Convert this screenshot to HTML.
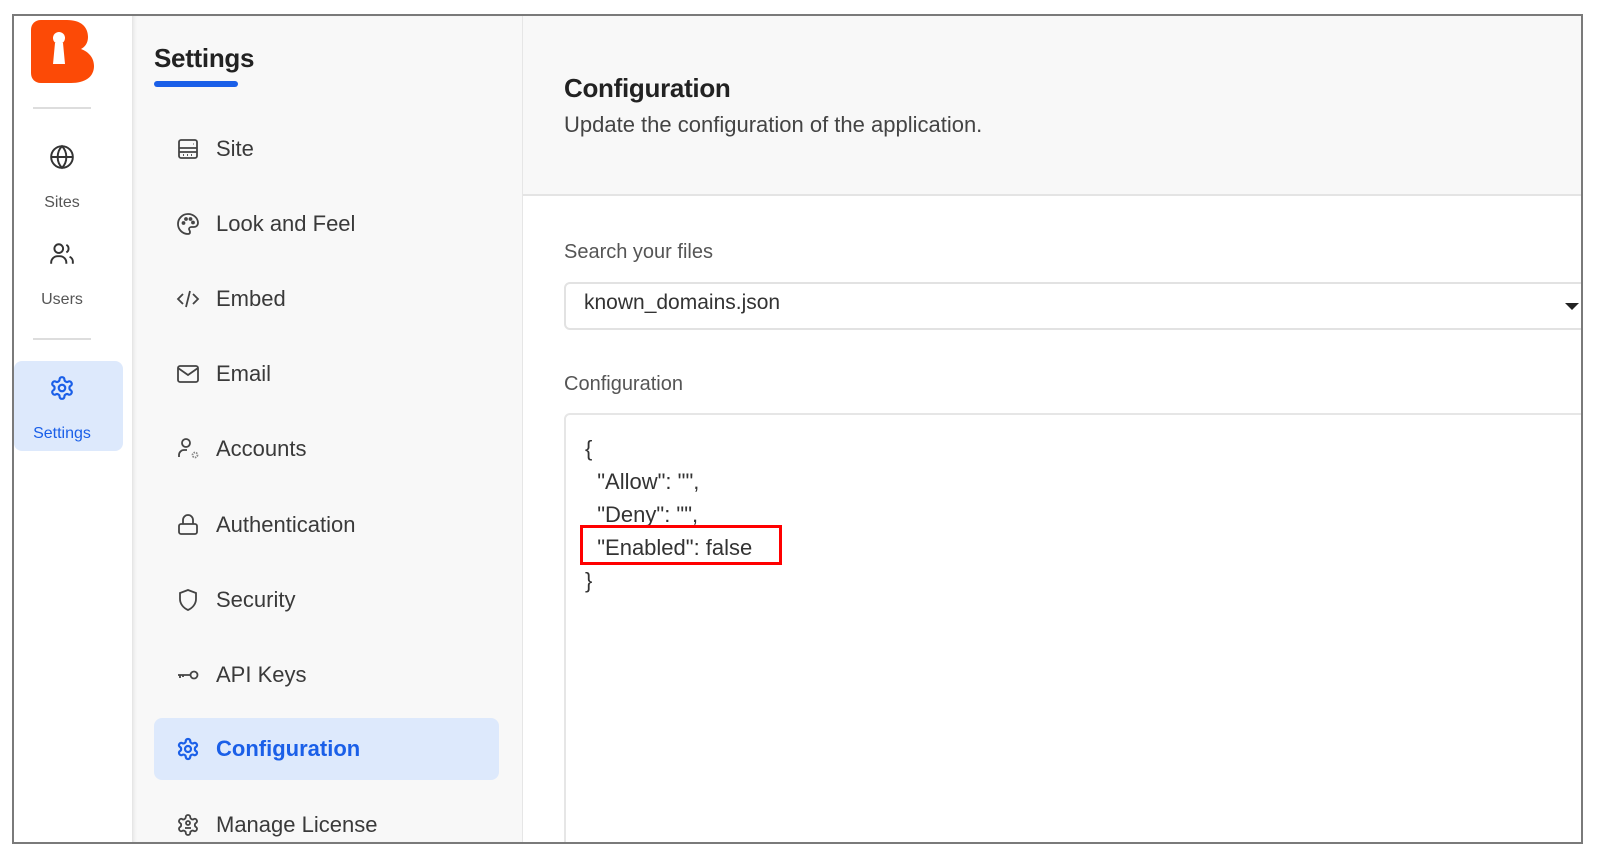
<!DOCTYPE html>
<html><head><meta charset="utf-8">
<style>
*{margin:0;padding:0;box-sizing:border-box}
html,body{width:1598px;height:851px;background:#fff;overflow:hidden;font-family:"Liberation Sans",Arial,sans-serif;color:#333}
.abs{position:absolute}
.frame{left:12px;top:14px;width:1571px;height:830px;border:2px solid #7a7a7a;overflow:hidden}
.rail{left:0;top:0;width:118px;height:100%;background:#fff}
.panel{left:118px;top:0;width:391px;height:100%;background:#f8f8f8;box-shadow:inset 4px 0 5px -3px rgba(0,0,0,.12);border-right:1px solid #e6e6e6}
.main{left:509px;top:0;right:0;height:100%;background:#fff}
.item{position:absolute;left:22px;font-size:22px;color:#3a3a3a;height:30px;line-height:30px}
.item svg{position:absolute;left:22px;top:3px}
.item span{position:absolute;left:62px;white-space:nowrap}
.rl{position:absolute;left:0;width:96px;text-align:center;font-size:16px;color:#555}
</style></head><body>
<div class="abs frame">
 <div class="abs rail">
  <svg class="abs" style="left:17px;top:4px" width="64" height="64" viewBox="0 0 64 64">
   <path d="M10 0H36C50 0 57 7 57 17C57 23 54 27 50 29C58 32 63 38 63 46C63 57 54 63 40 63H10C4 63 0 59 0 53V10C0 4 4 0 10 0Z" fill="#fc4a06"/>
   <circle cx="28" cy="18" r="6" fill="#fff"/>
   <path d="M24 23H32L34 44H22Z" fill="#fff"/>
  </svg>
  <div class="abs" style="left:19px;top:91px;width:58px;height:2px;background:#ddd"></div>
  <svg class="abs" style="left:35px;top:128px" width="26" height="26" viewBox="0 0 24 24" fill="none" stroke="#333" stroke-width="1.8"><circle cx="12" cy="12" r="10"/><path d="M2 12h20M12 2c3 3 4 6.5 4 10s-1 7-4 10c-3-3-4-6.5-4-10s1-7 4-10z"/></svg>
  <div class="rl" style="top:178px">Sites</div>
  <svg class="abs" style="left:35px;top:225px" width="26" height="26" viewBox="0 0 24 24" fill="none" stroke="#333" stroke-width="1.8"><circle cx="9" cy="7" r="4"/><path d="M2 21v-1a6 6 0 0 1 6-6h2a6 6 0 0 1 6 6v1M16 3.5a4 4 0 0 1 0 7M19 14.5a5 5 0 0 1 3 5V21"/></svg>
  <div class="rl" style="top:275px">Users</div>
  <div class="abs" style="left:19px;top:322px;width:58px;height:2px;background:#ddd"></div>
  <div class="abs" style="left:0px;top:345px;width:109px;height:90px;background:#dde9fc;border-radius:8px"></div>
  <svg class="abs" style="left:35px;top:359px" width="26" height="26" viewBox="0 0 24 24" fill="none" stroke="#1a5fe8" stroke-width="2"><path d="M12.22 2h-.44a2 2 0 0 0-2 2v.18a2 2 0 0 1-1 1.73l-.43.25a2 2 0 0 1-2 0l-.15-.08a2 2 0 0 0-2.73.73l-.22.38a2 2 0 0 0 .73 2.73l.15.1a2 2 0 0 1 1 1.72v.51a2 2 0 0 1-1 1.74l-.15.09a2 2 0 0 0-.73 2.73l.22.38a2 2 0 0 0 2.73.73l.15-.08a2 2 0 0 1 2 0l.43.25a2 2 0 0 1 1 1.73V20a2 2 0 0 0 2 2h.44a2 2 0 0 0 2-2v-.18a2 2 0 0 1 1-1.73l.43-.25a2 2 0 0 1 2 0l.15.08a2 2 0 0 0 2.73-.73l.22-.39a2 2 0 0 0-.73-2.73l-.15-.08a2 2 0 0 1-1-1.74v-.5a2 2 0 0 1 1-1.74l.15-.09a2 2 0 0 0 .73-2.73l-.22-.38a2 2 0 0 0-2.73-.73l-.15.08a2 2 0 0 1-2 0l-.43-.25a2 2 0 0 1-1-1.73V4a2 2 0 0 0-2-2z"/><circle cx="12" cy="12" r="3"/></svg>
  <div class="rl" style="top:409px;color:#1a5fe8">Settings</div>
 </div>
 <div class="abs panel">
  <div class="abs" style="left:22px;top:27px;font-size:26px;color:#222;font-weight:bold;letter-spacing:-0.3px">Settings</div>
  <div class="abs" style="left:22px;top:65px;width:84px;height:6px;border-radius:3px;background:#1a5fe8"></div>
  <div class="item" style="top:118px"><svg width="24" height="24" viewBox="0 0 24 24" fill="none" stroke="#444" stroke-width="1.8"><rect x="3" y="3" width="18" height="18" rx="2"/><path d="M3 11h18M3 15h18M7 18h1M11 18h1M15 18h1M17 7h.5"/></svg><span>Site</span></div>
  <div class="item" style="top:193px"><svg width="24" height="24" viewBox="0 0 24 24" fill="none" stroke="#444" stroke-width="1.8"><path d="M12 2a10 10 0 0 0 0 20c1.5 0 2-1 2-2 0-1.5-1-2-1-3s1-2 2.5-2H18a4 4 0 0 0 4-4c0-5-4.5-9-10-9z"/><circle cx="7.5" cy="11" r="1"/><circle cx="10" cy="7" r="1"/><circle cx="14.5" cy="7" r="1"/><circle cx="17" cy="10.5" r="1"/></svg><span>Look and Feel</span></div>
  <div class="item" style="top:268px"><svg width="24" height="24" viewBox="0 0 24 24" fill="none" stroke="#444" stroke-width="1.8"><path d="M7 7l-5 5 5 5M17 7l5 5-5 5M14 4l-4 16"/></svg><span>Embed</span></div>
  <div class="item" style="top:343px"><svg width="24" height="24" viewBox="0 0 24 24" fill="none" stroke="#444" stroke-width="1.8"><rect x="2" y="4" width="20" height="16" rx="2"/><path d="M2 6l10 7 10-7"/></svg><span>Email</span></div>
  <div class="item" style="top:418px"><svg width="26" height="24" viewBox="0 0 24 24" fill="none" stroke="#444" stroke-width="1.8"><circle cx="9" cy="6" r="4"/><path d="M2 20v-2a5 5 0 0 1 5-5h3"/><circle cx="18" cy="18" r="2.5" stroke="#888" stroke-dasharray="1.5 1"/></svg><span>Accounts</span></div>
  <div class="item" style="top:494px"><svg width="24" height="24" viewBox="0 0 24 24" fill="none" stroke="#444" stroke-width="1.8"><rect x="3" y="11" width="18" height="10" rx="2"/><path d="M7 11V7a5 5 0 0 1 10 0v4"/></svg><span>Authentication</span></div>
  <div class="item" style="top:569px"><svg width="24" height="24" viewBox="0 0 24 24" fill="none" stroke="#444" stroke-width="1.8"><path d="M12 2l8 3v6c0 5-3.5 9-8 11-4.5-2-8-6-8-11V5z"/></svg><span>Security</span></div>
  <div class="item" style="top:644px"><svg width="24" height="24" viewBox="0 0 24 24" fill="none" stroke="#444" stroke-width="1.8"><circle cx="18" cy="12" r="3.5"/><path d="M14.5 12H2M4 12v3M7 12v2"/></svg><span>API Keys</span></div>
  <div class="abs" style="left:22px;top:702px;width:345px;height:62px;background:#dde9fc;border-radius:8px"></div>
  <div class="item" style="top:718px;color:#1a5fe8;font-weight:bold"><svg width="24" height="24" viewBox="0 0 24 24" fill="none" stroke="#1a5fe8" stroke-width="2.2"><path d="M12.22 2h-.44a2 2 0 0 0-2 2v.18a2 2 0 0 1-1 1.73l-.43.25a2 2 0 0 1-2 0l-.15-.08a2 2 0 0 0-2.73.73l-.22.38a2 2 0 0 0 .73 2.73l.15.1a2 2 0 0 1 1 1.72v.51a2 2 0 0 1-1 1.74l-.15.09a2 2 0 0 0-.73 2.73l.22.38a2 2 0 0 0 2.73.73l.15-.08a2 2 0 0 1 2 0l.43.25a2 2 0 0 1 1 1.73V20a2 2 0 0 0 2 2h.44a2 2 0 0 0 2-2v-.18a2 2 0 0 1 1-1.73l.43-.25a2 2 0 0 1 2 0l.15.08a2 2 0 0 0 2.73-.73l.22-.39a2 2 0 0 0-.73-2.73l-.15-.08a2 2 0 0 1-1-1.74v-.5a2 2 0 0 1 1-1.74l.15-.09a2 2 0 0 0 .73-2.73l-.22-.38a2 2 0 0 0-2.73-.73l-.15.08a2 2 0 0 1-2 0l-.43-.25a2 2 0 0 1-1-1.73V4a2 2 0 0 0-2-2z"/><circle cx="12" cy="12" r="3"/></svg><span>Configuration</span></div>
  <div class="item" style="top:794px"><svg width="24" height="24" viewBox="0 0 24 24" fill="none" stroke="#444" stroke-width="1.8"><path d="M12.22 2h-.44a2 2 0 0 0-2 2v.18a2 2 0 0 1-1 1.73l-.43.25a2 2 0 0 1-2 0l-.15-.08a2 2 0 0 0-2.73.73l-.22.38a2 2 0 0 0 .73 2.73l.15.1a2 2 0 0 1 1 1.72v.51a2 2 0 0 1-1 1.74l-.15.09a2 2 0 0 0-.73 2.73l.22.38a2 2 0 0 0 2.73.73l.15-.08a2 2 0 0 1 2 0l.43.25a2 2 0 0 1 1 1.73V20a2 2 0 0 0 2 2h.44a2 2 0 0 0 2-2v-.18a2 2 0 0 1 1-1.73l.43-.25a2 2 0 0 1 2 0l.15.08a2 2 0 0 0 2.73-.73l.22-.39a2 2 0 0 0-.73-2.73l-.15-.08a2 2 0 0 1-1-1.74v-.5a2 2 0 0 1 1-1.74l.15-.09a2 2 0 0 0 .73-2.73l-.22-.38a2 2 0 0 0-2.73-.73l-.15.08a2 2 0 0 1-2 0l-.43-.25a2 2 0 0 1-1-1.73V4a2 2 0 0 0-2-2z"/><circle cx="12" cy="10" r="2"/><path d="M9 15h6"/></svg><span>Manage License</span></div>
 </div>
 <div class="abs main">
  <div class="abs" style="left:0;top:0;right:0;height:180px;background:#f8f8f8;border-bottom:2px solid #e4e4e4"></div>
  <div class="abs" style="left:41px;top:57px;font-size:26px;color:#222;font-weight:bold;letter-spacing:-0.3px">Configuration</div>
  <div class="abs" style="left:41px;top:96px;font-size:22px;color:#444">Update the configuration of the application.</div>
  <div class="abs" style="left:41px;top:225px;font-size:20px;color:#555">Search your files</div>
  <div class="abs" style="left:41px;top:266px;width:1100px;height:48px;border:2px solid #e2e2e2;border-radius:6px;background:#fff"></div>
  <div class="abs" style="left:61px;top:275px;font-size:21px;color:#333">known_domains.json</div>
  <div class="abs" style="left:1042px;top:287px;width:0;height:0;border-left:7px solid transparent;border-right:7px solid transparent;border-top:7px solid #222"></div>
  <div class="abs" style="left:41px;top:357px;font-size:20px;color:#555">Configuration</div>
  <div class="abs" style="left:41px;top:397px;width:1100px;height:440px;border:2px solid #e6e6e6;border-radius:6px;background:#fff"></div>
  <div class="abs" style="left:62px;top:416px;font-size:22px;color:#333;line-height:33px;white-space:pre">{
  "Allow": "",
  "Deny": "",
  "Enabled": false
}</div>
  <div class="abs" style="left:57px;top:509px;width:202px;height:40px;border:3px solid #f00"></div>
 </div>
</div>
</body></html>
